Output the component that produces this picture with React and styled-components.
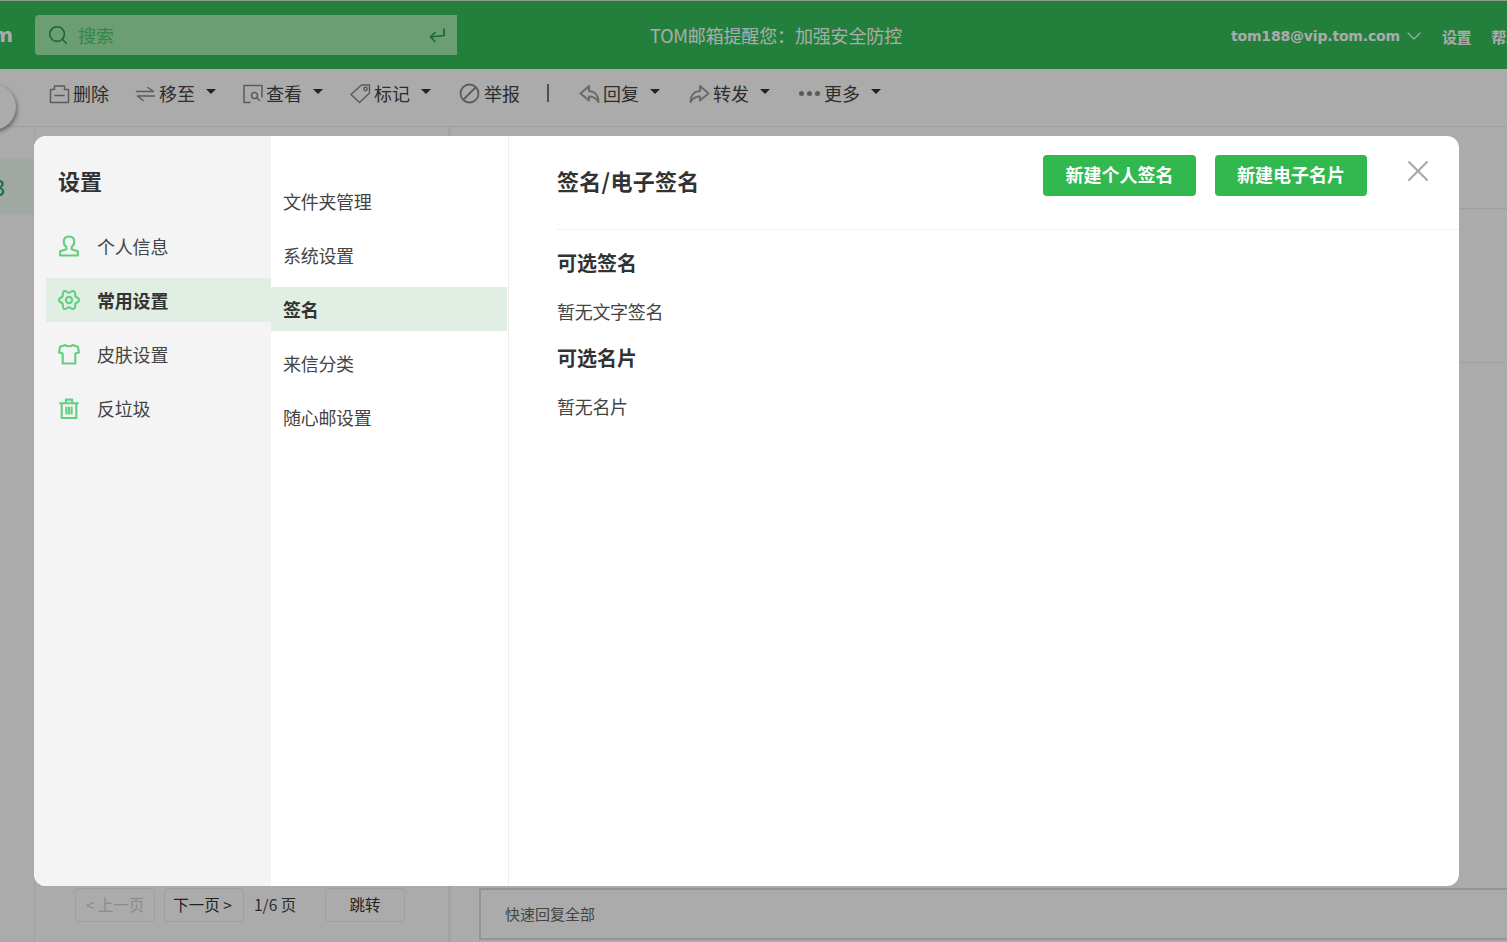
import React from 'react';
import styled, { createGlobalStyle } from 'styled-components';
import { ChevronDown, Search, X } from 'lucide-react';

const GlobalStyle = createGlobalStyle`
  html, body { margin: 0; padding: 0; height: 100%; overflow: hidden; }
  body { font-family: "Noto Sans CJK SC", "Noto Sans", sans-serif; color: #333; background: #fff; }
  * { box-sizing: border-box; }
`;

const Page = styled.div`
  width: 1507px;
  height: 942px;
  display: flex;
  flex-direction: column;
  overflow: hidden;
  position: relative;
`;

const Header = styled.header`
  height: 69px;
  flex: none;
  display: flex;
  align-items: center;
  background: #33bf5a;
  border-top: 1px solid #d8e8dc;
  color: #fff;
  white-space: nowrap;
  overflow: hidden;
`;

const Logo = styled.div`
  width: 13px;
  flex: none;
  display: flex;
  justify-content: flex-end;
  margin-right: 22px;
  font: bold 20px "DejaVu Sans", sans-serif;
  overflow: hidden;
`;

const SearchBox = styled.div`
  width: 422px;
  height: 40px;
  flex: none;
  display: flex;
  align-items: center;
  padding: 0 11px 0 12px;
  border-radius: 4px 0 0 4px;
  background: #a1ecad;
  color: #4bcb68;
  font-size: 18px;
  span { margin-left: 9px; flex: 1; }
`;

const Notice = styled.div`
  margin-left: 193px;
  width: 252px;
  flex: none;
  font-size: 18px;
  letter-spacing: -0.15px;
  margin-top: -1px;
`;

const UserMenu = styled.div`
  margin-left: 329px;
  display: flex;
  align-items: center;
  flex: none;
  font-size: 15px;
  font-weight: 700;
  b { font: bold 14px "DejaVu Sans", sans-serif; letter-spacing: -0.18px; margin-top: 2px; }
  svg { margin: 2px 16px 0 2px; }
  a { margin-right: 20px; margin-top: 2px; letter-spacing: -0.3px; }
`;

const Toolbar = styled.nav`
  height: 58px;
  flex: none;
  display: flex;
  align-items: center;
  padding: 0 0 9px 49px;
  background: #fff;
  border-bottom: 1px solid #eee;
  font-size: 18px;
  color: #444;
`;

const ToolItem = styled.div`
  display: flex;
  align-items: center;
  gap: ${(p) => p.$gap || 3}px;
  margin-left: ${(p) => p.$ml || 0}px;
  svg { flex: none; }
`;

const Caret = styled.i`
  width: 0;
  height: 0;
  margin-left: 8px;
  border-left: 5.5px solid transparent;
  border-right: 5.5px solid transparent;
  border-top: 5px solid #333;
  margin-top: -3px;
`;

const Separator = styled.span`
  width: 2px;
  height: 18px;
  margin-left: 27px;
  background: #777;
`;

const ComposeButton = styled.div`
  position: absolute;
  left: -30px;
  top: 84px;
  width: 46px;
  height: 46px;
  border-radius: 50%;
  background: #fff;
  box-shadow: 1px 2px 4px rgba(0, 0, 0, 0.45);
`;

const Body = styled.main`
  flex: 1;
  min-height: 0;
  display: flex;
`;

const FolderRail = styled.aside`
  width: 35px;
  flex: none;
  padding-top: 31px;
  border-right: 1px solid #f0f0f0;
`;

const FolderRow = styled.div`
  height: 56px;
  display: flex;
  align-items: center;
  background: #f0fbf3;
  color: #1fa35a;
  font-size: 22px;
  overflow: hidden;
  span { margin-left: -7px; }
`;

const ListColumn = styled.section`
  width: 416px;
  flex: none;
  display: flex;
  flex-direction: column;
  border-right: 3px solid #f4f4f4;
`;

const Pager = styled.div`
  margin-top: auto;
  display: flex;
  align-items: center;
  height: 34px;
  margin-bottom: 20px;
  padding-left: 40px;
  font-size: 15.500px;
`;

const PagerButton = styled.button`
  width: 80px;
  height: 34px;
  margin-right: ${(p) => p.$gap || 0}px;
  padding: 0 ${(p) => p.$pr || 0}px 2px 0;
  border: 1px solid #eee;
  border-radius: 3px;
  background: #fff;
  font: inherit;
  color: ${(p) => (p.disabled ? '#d0d0d0' : '#333')};
`;

const PageCount = styled.span`
  width: 71px;
  margin-top: -2px;
  color: #444;
`;

const ReadPane = styled.section`
  flex: 1;
  min-width: 0;
  display: flex;
  flex-direction: column;
`;

const PaneRow = styled.div`
  height: ${(p) => p.$h}px;
  flex: none;
  border-bottom: 1px solid #eee;
`;

const QuickReply = styled.div`
  margin: auto 0 2px 28px;
  height: 52px;
  display: flex;
  align-items: center;
  padding: 0 0 2px 24px;
  border: 2px solid #ddd;
  border-right: 0;
  font-size: 15px;
  color: #666;
`;

const Mask = styled.div`
  position: absolute;
  inset: 0;
  background: rgba(0, 0, 0, 0.33);
`;

const Dialog = styled.div`
  position: absolute;
  left: 34px;
  top: 136px;
  width: 1425px;
  height: 750px;
  display: flex;
  overflow: hidden;
  border-radius: 12px;
  background: #fff;
`;

const MainNav = styled.div`
  width: 237px;
  flex: none;
  padding-top: 29px;
  background: #f4f4f4;
`;

const NavTitle = styled.h2`
  margin: 0 0 29px 24px;
  font-size: 22px;
  line-height: 30px;
  font-weight: 700;
`;

const NavList = styled.div`
  display: flex;
  flex-direction: column;
  gap: 10px;
`;

const MainNavItem = styled.div`
  height: 44px;
  margin-left: 12px;
  padding-left: 12px;
  display: flex;
  align-items: center;
  gap: 17px;
  font-size: 18px;
  letter-spacing: -0.2px;
  color: ${(p) => (p.$active ? '#333' : '#444')};
  font-weight: ${(p) => (p.$active ? 700 : 400)};
  background: ${(p) => (p.$active ? '#e0eee4' : 'transparent')};
  svg { flex: none; }
`;

const SubNav = styled.div`
  width: 238px;
  flex: none;
  padding: 43px 1px 0 0;
  border-right: 1px solid #eee;
`;

const SubNavItem = styled.div`
  height: 44px;
  padding-left: 12px;
  display: flex;
  align-items: center;
  font-size: 18px;
  letter-spacing: -0.3px;
  color: ${(p) => (p.$active ? '#333' : '#444')};
  font-weight: ${(p) => (p.$active ? 700 : 400)};
  background: ${(p) => (p.$active ? '#e0eee4' : 'transparent')};
`;

const Content = styled.div`
  flex: 1;
  min-width: 0;
  padding-left: 48px;
`;

const ContentHeader = styled.div`
  height: 94px;
  display: flex;
  align-items: flex-start;
  padding-top: 19px;
  border-bottom: 1px solid #f2f2f2;
`;

const ContentTitle = styled.h1`
  margin: 9px auto 0 0;
  font-size: 22px;
  line-height: 32px;
  letter-spacing: 0.3px;
  font-weight: 700;
`;

const PrimaryButton = styled.button`
  width: ${(p) => p.$w}px;
  height: 41px;
  margin-right: ${(p) => p.$gap || 0}px;
  padding: 0 0 3px;
  border: 0;
  border-radius: 4px;
  background: #31b950;
  color: #fff;
  font: 700 18px "Noto Sans CJK SC", sans-serif;
`;

const CloseButton = styled.div`
  width: 36px;
  margin: -2px 23px 0 33px;
  color: #a8a8a8;
  display: flex;
  justify-content: center;
`;

const SectionTitle = styled.h3`
  margin: 0;
  height: 34px;
  line-height: 34px;
  font-size: 20px;
  font-weight: 700;
`;

const EmptyText = styled.p`
  margin: 0;
  height: 30px;
  line-height: 30px;
  font-size: 18px;
  letter-spacing: -0.3px;
  color: #444;
  margin-top: ${(p) => p.$top}px;
  margin-bottom: ${(p) => p.$bottom}px;
`;

const ContentBody = styled.div`
  padding-top: 16px;
`;

const Line = ({ size = 21, children, color = '#888', w = 1.5 }) => (
  <svg width={size} height={size} viewBox="0 0 21 21" fill="none" stroke={color} strokeWidth={w} strokeLinecap="round" strokeLinejoin="round">
    {children}
  </svg>
);

// six lobed gear outline, easier to compute than to write by hand
const gearPath = () => {
  const pts = [];
  for (let i = 0; i < 72; i++) {
    const a = (i * Math.PI) / 36;
    const r = 8.300 + 1.300 * Math.cos(6 * a);
    pts.push(`${(10.500 + r * Math.cos(a)).toFixed(2)} ${(10.500 + r * Math.sin(a)).toFixed(2)}`);
  }
  return `M${pts.join('L')}z`;
};

const moveItems = [
  { label: '移至', ml: 26, icon: <><path d="M1.500 8.500h17L13 4.500" /><path d="M19.500 13H2.500L8 17.500" /></> },
  { label: '查看', ml: 26, icon: <><path d="M20 14V2.500H2v17h6" /><circle cx="12.500" cy="12.500" r="3" /><path d="M15 15l2.500 2.500" /></> },
  { label: '标记', ml: 27, icon: <><path d="M1 11.500L11.500 2h8v8L9.500 19.500z" /><circle cx="15.500" cy="6" r="1.700" /></> },
];

const replyItems = [
  { label: '回复', ml: 30, icon: <path d="M10 3L1.500 10.500 10 17.500V13.500c4 0 7 1.500 9.500 5.500 0-6.500-3-10.500-9.500-11z" /> },
  { label: '转发', ml: 29, icon: <path d="M11 3l8.500 7.500L11 17.500V13.500c-4 0-7 1.500-9.500 5.500 0-6.500 3-10.500 9.500-11z" /> },
];

const navItems = [
  {
    label: '个人信息',
    icon: <path d="M10.500 1.500c-3 0-5 2-5 5 0 2.500 1 4 2.500 5v2L2 15.500V19.500h17v-4l-6-2v-2c1.500-1 2.500-2.500 2.500-5 0-3-2-5-5-5z" />,
  },
  {
    label: '常用设置',
    active: true,
    icon: <><path d={gearPath()} /><circle cx="10.500" cy="10.500" r="3" /></>,
  },
  {
    label: '皮肤设置',
    icon: <path d="M7 2c1 1.500 6 1.500 7 0l5 1.500 1 5.500-3.500 1v9.500h-12V10L1 9l1-5.500z" />,
  },
  {
    label: '反垃圾',
    icon: <><path d="M2 6h17M7.500 6V2.500h6V6M3.500 6v14h14V6" /><path d="M8 10v6M10.500 10v6M13 10v6" /></>,
  },
];

const subItems = ['文件夹管理', '系统设置', '签名', '来信分类', '随心邮设置'];

export default function App() {
  return (
    <Page>
      <GlobalStyle />
      <Header>
        <Logo><span>tom</span></Logo>
        <SearchBox>
          <Search size={22} strokeWidth={1.8} color="#2c9a4a" />
          <span>搜索</span>
          <svg width="18" height="18" viewBox="0 0 18 18" fill="none" stroke="#2c9a4a" strokeWidth="1.700">
            <path d="M16 2.500V9.500L2.500 11M7.500 6L2.500 11l5 5" />
          </svg>
        </SearchBox>
        <Notice>TOM邮箱提醒您：加强安全防控</Notice>
        <UserMenu>
          <b>tom188@vip.tom.com</b>
          <ChevronDown size={24} strokeWidth={1.100} />
          <a>设置</a>
          <a>帮助</a>
        </UserMenu>
      </Header>
      <Toolbar>
        <ToolItem>
          <Line>
            <path d="M1.500 19.500V6.500h4V3h10v3.500h4v13z" />
            <path d="M6 12.500h9" />
          </Line>
          删除
        </ToolItem>
        {moveItems.map((item) => (
          <ToolItem key={item.label} $ml={item.ml}>
            <Line>{item.icon}</Line>
            {item.label}
            <Caret />
          </ToolItem>
        ))}
        <ToolItem $ml={28} $gap={4}>
          <Line w={1.800}>
            <circle cx="10.500" cy="10.500" r="9" />
            <path d="M4.500 16.500l12-12" />
          </Line>
          举报
        </ToolItem>
        <Separator />
        {replyItems.map((item) => (
          <ToolItem key={item.label} $ml={item.ml}>
            <Line w={2} color="#a0a0a0">{item.icon}</Line>
            {item.label}
            <Caret />
          </ToolItem>
        ))}
        <ToolItem $ml={28}>
          <svg width="23" height="21" viewBox="0 0 23 21" fill="#888">
            <circle cx="3.500" cy="10.500" r="2.500" />
            <circle cx="11.500" cy="10.500" r="2.500" />
            <circle cx="19.500" cy="10.500" r="2.500" />
          </svg>
          更多
          <Caret />
        </ToolItem>
      </Toolbar>
      <ComposeButton />
      <Body>
        <FolderRail>
          <FolderRow><span>3</span></FolderRow>
        </FolderRail>
        <ListColumn>
          <Pager>
            <PagerButton disabled $gap={9}>&lt; 上一页</PagerButton>
            <PagerButton $gap={10} $pr={3}>下一页 &gt;</PagerButton>
            <PageCount>1/6 页</PageCount>
            <PagerButton>跳转</PagerButton>
          </Pager>
        </ListColumn>
        <ReadPane>
          <PaneRow $h={82} />
          <PaneRow $h={154} />
          <QuickReply>快速回复全部</QuickReply>
        </ReadPane>
      </Body>
      <Mask />
      <Dialog>
        <MainNav>
          <NavTitle>设置</NavTitle>
          <NavList>
            {navItems.map((item) => (
              <MainNavItem key={item.label} $active={item.active}>
                <Line size={22} color="#62cf80" w={2}>{item.icon}</Line>
                {item.label}
              </MainNavItem>
            ))}
          </NavList>
        </MainNav>
        <SubNav>
          <NavList>
            {subItems.map((label) => (
              <SubNavItem key={label} $active={label === '签名'}>{label}</SubNavItem>
            ))}
          </NavList>
        </SubNav>
        <Content>
          <ContentHeader>
            <ContentTitle>签名/电子签名</ContentTitle>
            <PrimaryButton $w={153} $gap={19}>新建个人签名</PrimaryButton>
            <PrimaryButton $w={152}>新建电子名片</PrimaryButton>
            <CloseButton><X size={36} strokeWidth={1.400} /></CloseButton>
          </ContentHeader>
          <ContentBody>
            <SectionTitle>可选签名</SectionTitle>
            <EmptyText $top={16} $bottom={15}>暂无文字签名</EmptyText>
            <SectionTitle>可选名片</SectionTitle>
            <EmptyText $top={16}>暂无名片</EmptyText>
          </ContentBody>
        </Content>
      </Dialog>
    </Page>
  );
}
